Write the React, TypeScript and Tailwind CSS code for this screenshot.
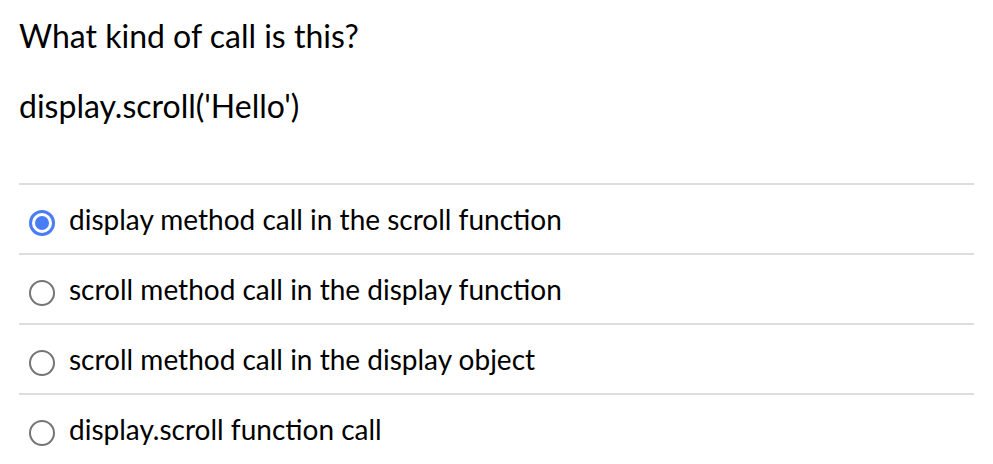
const options = [
  "display method call in the scroll function",
  "scroll method call in the display function",
  "scroll method call in the display object",
  "display.scroll function call",
];

function Radio({ checked }: { checked: boolean }) {
  if (checked) {
    return (
      <span className="mt-[7px] flex h-[26px] w-[26px] shrink-0 items-center justify-center rounded-full border-[3px] border-[#4a7cf6]">
        <span className="h-[14px] w-[14px] rounded-full bg-[#4a7cf6]" />
      </span>
    );
  }
  return <span className="mt-[7px] h-[26px] w-[26px] shrink-0 rounded-full border-2 border-[#757575]" />;
}

export default function App() {
  return (
    <div className="min-h-screen bg-white px-[19px] pt-[16px] font-['Lato',sans-serif] text-black">
      <p className="text-[32px] leading-[40px]">What kind of call is this?</p>
      <p className="mt-[30px] text-[32px] leading-[40px]">display.scroll('Hello')</p>
      <div className="mt-[57px]">
        {options.map((label, i) => (
          <div
            key={label}
            className="flex h-[70px] items-center gap-[14px] border-t-2 border-[#dddddd] pl-[10px]"
          >
            <Radio checked={i === 0} />
            <span className="text-[28px] leading-[34px]">{label}</span>
          </div>
        ))}
      </div>
    </div>
  );
}
